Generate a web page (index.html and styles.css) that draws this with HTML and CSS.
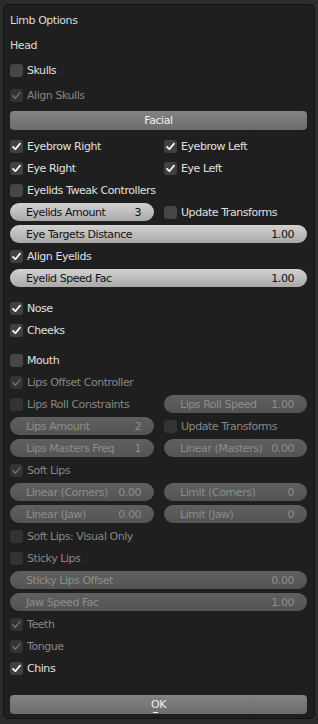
FILE: index.html
```html
<!DOCTYPE html>
<html lang="en">
<head>
    <meta charset="UTF-8">
    <meta name="viewport" content="width=device-width, initial-scale=1.0">
    <title>Limb Options</title>
    <link rel="stylesheet" href="styles.css">
</head>
<body>
    <div class="dialog">
        <div class="top-group">
            <div class="row tall"><span class="label">Limb Options</span></div>
            <div class="row tall"><span class="label">Head</span></div>
            <div class="row tall"><div class="check"><span class="box"></span>Skulls</div></div>
            <div class="row tall"><div class="check off on"><span class="box"><svg viewBox="0 0 13 13"><path d="M3 6.8 L5.4 9.2 L10 3.6"/></svg></span>Align Skulls</div></div>
            <div class="row tall"><div class="button">Facial</div></div>
        </div>

        <div class="group first">
            <div class="row cols">
                <div class="check on"><span class="box"><svg viewBox="0 0 13 13"><path d="M3 6.8 L5.4 9.2 L10 3.6"/></svg></span>Eyebrow Right</div>
                <div class="check on"><span class="box"><svg viewBox="0 0 13 13"><path d="M3 6.8 L5.4 9.2 L10 3.6"/></svg></span>Eyebrow Left</div>
            </div>
            <div class="row cols">
                <div class="check on"><span class="box"><svg viewBox="0 0 13 13"><path d="M3 6.8 L5.4 9.2 L10 3.6"/></svg></span>Eye Right</div>
                <div class="check on"><span class="box"><svg viewBox="0 0 13 13"><path d="M3 6.8 L5.4 9.2 L10 3.6"/></svg></span>Eye Left</div>
            </div>
            <div class="row"><div class="check"><span class="box"></span>Eyelids Tweak Controllers</div></div>
            <div class="row cols">
                <div class="slider"><span>Eyelids Amount</span><span>3</span></div>
                <div class="check"><span class="box"></span>Update Transforms</div>
            </div>
            <div class="row"><div class="slider"><span>Eye Targets Distance</span><span>1.00</span></div></div>
            <div class="row"><div class="check on"><span class="box"><svg viewBox="0 0 13 13"><path d="M3 6.8 L5.4 9.2 L10 3.6"/></svg></span>Align Eyelids</div></div>
            <div class="row"><div class="slider"><span>Eyelid Speed Fac</span><span>1.00</span></div></div>
        </div>

        <div class="group">
            <div class="row"><div class="check on"><span class="box"><svg viewBox="0 0 13 13"><path d="M3 6.8 L5.4 9.2 L10 3.6"/></svg></span>Nose</div></div>
            <div class="row"><div class="check on"><span class="box"><svg viewBox="0 0 13 13"><path d="M3 6.8 L5.4 9.2 L10 3.6"/></svg></span>Cheeks</div></div>
        </div>

        <div class="group">
            <div class="row"><div class="check"><span class="box"></span>Mouth</div></div>
            <div class="row"><div class="check off on"><span class="box"><svg viewBox="0 0 13 13"><path d="M3 6.8 L5.4 9.2 L10 3.6"/></svg></span>Lips Offset Controller</div></div>
            <div class="row cols">
                <div class="check off"><span class="box"></span>Lips Roll Constraints</div>
                <div class="slider off"><span>Lips Roll Speed</span><span>1.00</span></div>
            </div>
            <div class="row cols">
                <div class="slider off"><span>Lips Amount</span><span>2</span></div>
                <div class="check off"><span class="box"></span>Update Transforms</div>
            </div>
            <div class="row cols">
                <div class="slider off"><span>Lips Masters Freq</span><span>1</span></div>
                <div class="slider off"><span>Linear (Masters)</span><span>0.00</span></div>
            </div>
            <div class="row"><div class="check off on"><span class="box"><svg viewBox="0 0 13 13"><path d="M3 6.8 L5.4 9.2 L10 3.6"/></svg></span>Soft Lips</div></div>
            <div class="row cols">
                <div class="slider off"><span>Linear (Corners)</span><span>0.00</span></div>
                <div class="slider off"><span>Limit (Corners)</span><span>0</span></div>
            </div>
            <div class="row cols">
                <div class="slider off"><span>Linear (Jaw)</span><span>0.00</span></div>
                <div class="slider off"><span>Limit (Jaw)</span><span>0</span></div>
            </div>
            <div class="row"><div class="check off"><span class="box"></span>Soft Lips: Visual Only</div></div>
            <div class="row"><div class="check off"><span class="box"></span>Sticky Lips</div></div>
            <div class="row"><div class="slider off"><span>Sticky Lips Offset</span><span>0.00</span></div></div>
            <div class="row"><div class="slider off"><span>Jaw Speed Fac</span><span>1.00</span></div></div>
            <div class="row"><div class="check off on"><span class="box"><svg viewBox="0 0 13 13"><path d="M3 6.8 L5.4 9.2 L10 3.6"/></svg></span>Teeth</div></div>
            <div class="row"><div class="check off on"><span class="box"><svg viewBox="0 0 13 13"><path d="M3 6.8 L5.4 9.2 L10 3.6"/></svg></span>Tongue</div></div>
            <div class="row"><div class="check on"><span class="box"><svg viewBox="0 0 13 13"><path d="M3 6.8 L5.4 9.2 L10 3.6"/></svg></span>Chins</div></div>
        </div>

        <div class="button ok">OK<span class="accel"></span></div>
    </div>
</body>
</html>
```

FILE: styles.css
```css
* {
    box-sizing: border-box;
    margin: 0;
    padding: 0;
}

body {
    font-family: 'DejaVu Sans', 'Liberation Sans', sans-serif;
    font-size: 11px;
    letter-spacing: -0.45px;
    color: #dcdcdc;
    background-color: #2c2c2c;
    width: 318px;
    height: 724px;
    overflow: hidden;
}

.dialog {
    margin: 4px 0 0 3px;
    width: 312px;
    height: 715px;
    padding: 3px 7px 0 6px;
    background-color: #1f1f1f;
    border: 1px solid #121212;
    border-radius: 5px;
}

.row {
    height: 22px;
    display: flex;
    align-items: center;
}

.row.tall {
    height: 25px;
}

.cols {
    display: grid;
    grid-template-columns: 144px 143px;
    column-gap: 10px;
}

.group {
    margin-top: 8px;
}

.group.first {
    margin-top: 2px;
}

.label {
    color: #dcdcdc;
}

.check {
    display: flex;
    align-items: center;
    gap: 4px;
    white-space: nowrap;
    color: #e0e0e0;
}

.box {
    width: 13px;
    height: 13px;
    border-radius: 3px;
    background-color: #464646;
    display: flex;
}

.check.on .box {
    background-color: #414141;
}

.box svg {
    width: 13px;
    height: 13px;
    fill: none;
    stroke: #ffffff;
    stroke-width: 1.7;
    stroke-linecap: round;
    stroke-linejoin: round;
}

.check.off {
    color: #878787;
}

.check.off .box {
    background-color: #333333;
}

.check.off .box svg {
    stroke: #757575;
    stroke-width: 1.3;
}

.slider {
    width: 100%;
    height: 18px;
    border-radius: 9px;
    background: linear-gradient(#d2d2d2, #a9a9a9);
    color: #111111;
    display: flex;
    justify-content: space-between;
    align-items: center;
    padding: 0 13px 0 16px;
    white-space: nowrap;
}

.slider.off {
    background: linear-gradient(#5f5f5f, #545454);
    color: #8d8d8d;
}

.button {
    width: 100%;
    height: 19px;
    border-radius: 4px;
    background: linear-gradient(#838383, #6c6c6c);
    color: #f0f0f0;
    display: flex;
    justify-content: center;
    align-items: center;
}

.ok {
    margin-top: 16px;
    position: relative;
}

.accel {
    position: absolute;
    left: 143px;
    bottom: 1px;
    width: 5px;
    height: 1px;
    background-color: #f0f0f0;
}
```
